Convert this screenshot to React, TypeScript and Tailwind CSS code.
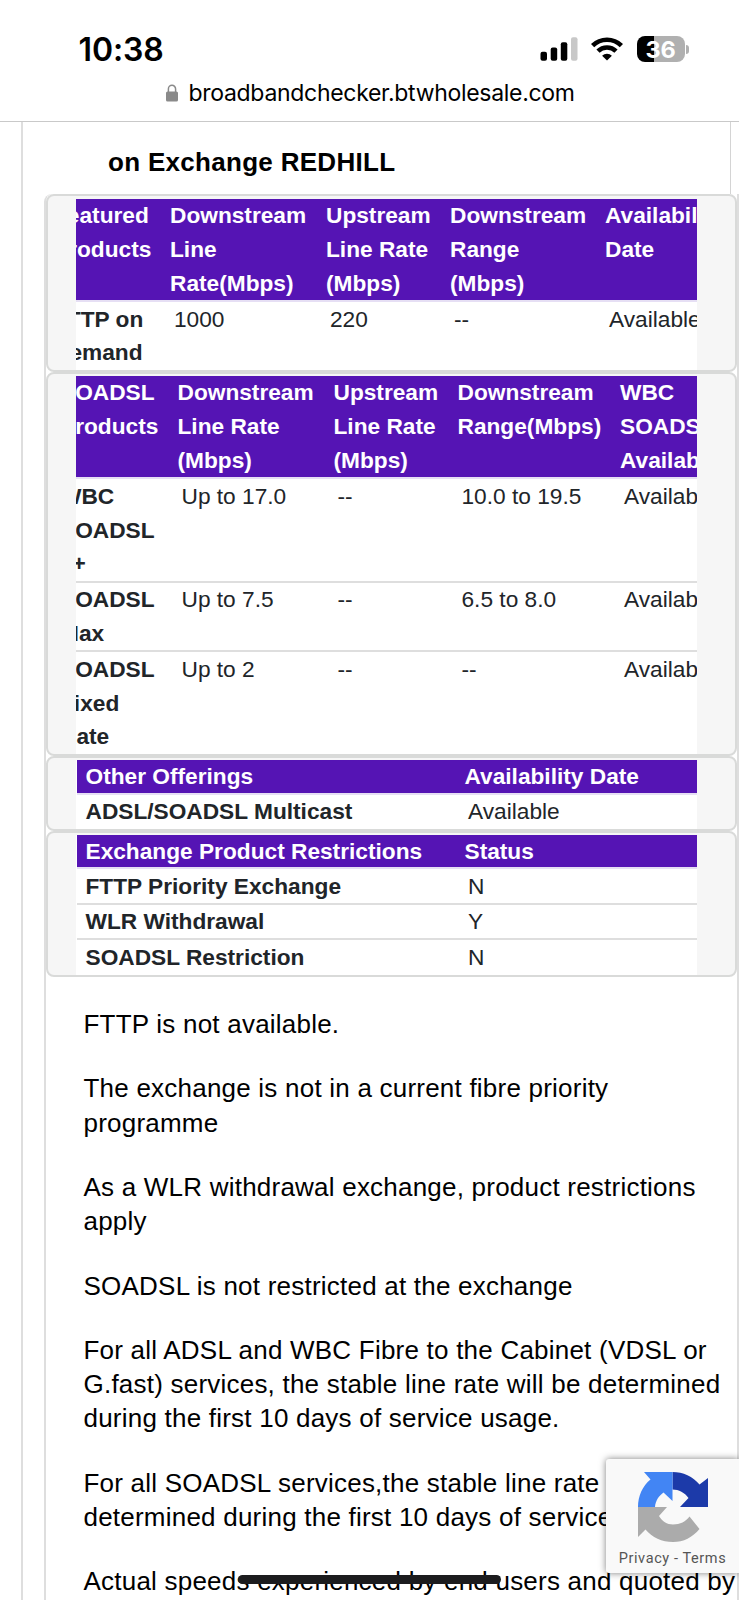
import type { ReactNode } from 'react';

type Row = string[][];

type Product = {
  columns: string;
  head: Row;
  rows: Row[];
};

const FEATURED: Product = {
  columns: '-ml-[23px] grid-cols-[117px_156px_124px_155px_160px]',
  head: [
    ['Featured', 'Products'],
    ['Downstream', 'Line', 'Rate(Mbps)'],
    ['Upstream', 'Line Rate', '(Mbps)'],
    ['Downstream', 'Range', '(Mbps)'],
    ['Availability', 'Date'],
  ],
  rows: [[['FTTP on', 'Demand'], ['1000'], ['220'], ['--'], ['Available']]],
};

const SOADSL: Product = {
  columns: '-ml-[16px] grid-cols-[117.5px_156px_124px_162.5px_160px]',
  head: [
    ['SOADSL', 'Products'],
    ['Downstream', 'Line Rate', '(Mbps)'],
    ['Upstream', 'Line Rate', '(Mbps)'],
    ['Downstream', 'Range(Mbps)'],
    ['WBC', 'SOADSL', 'Availability'],
  ],
  rows: [
    [['WBC', 'SOADSL', '2+'], ['Up to 17.0'], ['--'], ['10.0 to 19.5'], ['Available']],
    [['SOADSL', 'Max'], ['Up to 7.5'], ['--'], ['6.5 to 8.0'], ['Available']],
    [['SOADSL', 'Fixed', 'Rate'], ['Up to 2'], ['--'], ['--'], ['Available']],
  ],
};

const NOTES = [
  ['FTTP is not available.'],
  ['The exchange is not in a current fibre priority', 'programme'],
  ['As a WLR withdrawal exchange, product restrictions', 'apply'],
  ['SOADSL is not restricted at the exchange'],
  [
    'For all ADSL and WBC Fibre to the Cabinet (VDSL or',
    'G.fast) services, the stable line rate will be determined',
    'during the first 10 days of service usage.',
  ],
  ['For all SOADSL services,the stable line rate', 'determined during the first 10 days of service'],
  ['Actual speeds experienced by end users and quoted by'],
];

function StatusBar() {
  return (
    <div className="flex h-[72px] items-end justify-between pl-[78.5px] pr-[50px]">
      <span className="pt-px font-[Inter,sans-serif] text-[32px] font-semibold leading-[45px] tracking-[-0.1px]">10:38</span>
      <div className="flex h-[46px] items-center">
        <svg width="38" height="26" viewBox="0 0 38 26">
          <rect x="0.5" y="15.8" width="6.5" height="9" rx="2" fill="#000" />
          <rect x="10.7" y="11.6" width="6.5" height="13.2" rx="2" fill="#000" />
          <rect x="20.8" y="6.3" width="6.5" height="18.5" rx="2" fill="#000" />
          <rect x="31" y="1.2" width="6.5" height="23.6" rx="2" fill="#c8c8c8" />
        </svg>
        <svg className="ml-[13px]" width="32" height="26" viewBox="0 -0.8 32 26" fill="none" stroke="#000" strokeWidth="4.6">
          <path d="M1.6 8.8a20.6 20.6 0 0 1 28.8 0" />
          <path d="M7 14.3a12.9 12.9 0 0 1 18 0" />
          <path d="M16 23.8l-4.9-4.9a6.9 6.9 0 0 1 9.8 0z" fill="#000" stroke="none" />
        </svg>
        <div className="ml-[13.5px] flex h-[26px] w-[48px] items-start justify-center rounded-[8px] bg-linear-to-r from-black from-36% to-[#b0b0b0] to-36%">
          <span className="pt-px font-[Inter,sans-serif] text-[23.5px] font-bold leading-[26px] tracking-[-0.3px] text-white">36</span>
        </div>
        <div className="ml-[1.5px] h-[9px] w-[3px] rounded-r-full bg-[#b0b0b0]" />
      </div>
    </div>
  );
}

function AddressBar() {
  return (
    <div className="flex h-[49px] items-start pl-[166px] pt-[6px]">
      <svg className="mt-[6px]" width="12" height="18" viewBox="0 0 12 18">
        <path d="M2.4 9V4.9a3.6 3.6 0 0 1 7.2 0V9" fill="none" stroke="#8a8a8a" strokeWidth="1.5" />
        <rect x="0" y="7.5" width="12" height="10" rx="1.6" fill="#8a8a8a" />
      </svg>
      <span className="ml-[10.5px] whitespace-nowrap font-[Inter,sans-serif] text-[23px] leading-[31px] tracking-[-0.3px]">
        broadbandchecker.btwholesale.com
      </span>
    </div>
  );
}

function Lines({ lines }: { lines: string[] }) {
  return (
    <>
      {lines.map((line, i) => (
        <div key={i} className="whitespace-nowrap">{line}</div>
      ))}
    </>
  );
}

function Fieldset({ children }: { children: ReactNode }) {
  return (
    <div className="rounded-[8px] border-2 border-[#d9dad9] bg-[#f6f6f6] pl-[28px] pr-[38px] pt-[2px] first:pt-[3px]">
      <div className="overflow-hidden bg-white pb-[0.6px] text-[22.7px] leading-[33.8px] text-[#212529]">
        {children}
      </div>
    </div>
  );
}

function ProductTable({ columns, head, rows }: Product) {
  return (
    <div>
      <div className="h-[103px] border-b-2 border-[#e6dff4] bg-[#5514b4] font-bold text-white">
        <div className={`grid ${columns}`}>
          {head.map((cell, i) => (
            <div key={i} className="pt-[0.3px]"><Lines lines={cell} /></div>
          ))}
        </div>
      </div>
      {rows.map((row, r) => (
        <div key={r} className="border-b-2 border-[#dedede] last:border-b-0">
          <div className={`-mb-[0.6px] grid pt-[0.6px] ${columns}`}>
            {row.map((cell, i) => (
              <div key={i} className={i === 0 ? 'font-bold' : 'pl-[4px]'}><Lines lines={cell} /></div>
            ))}
          </div>
        </div>
      ))}
    </div>
  );
}

function PairTable({ head, rows }: { head: string[]; rows: string[][] }) {
  return (
    <div className="pl-px">
      <div className="flex h-[34.4px] border-b-2 border-[#e6dff4] bg-[#5514b4] pl-[8.5px] font-bold text-white">
        <span className="w-[379px]">{head[0]}</span>
        <span>{head[1]}</span>
      </div>
      {rows.map(row => (
        <div key={row[0]} className="flex h-[35.5px] border-b-2 border-[#dedede] pl-[8.5px] pt-[0.4px] last:h-[33.8px] last:border-b-0">
          <span className="w-[382.5px] font-bold">{row[0]}</span>
          <span>{row[1]}</span>
        </div>
      ))}
    </div>
  );
}

function Recaptcha() {
  return (
    <div className="absolute right-0 top-[1459px] z-10 flex h-[114px] w-[133px] flex-col items-center rounded-l-[3px] bg-[#f9f9f9] pt-[12px] shadow-[0_0_7px_rgba(0,0,0,0.5)]">
      <svg width="72" height="72" viewBox="0 0 72 72">
        <path d="M35.500 1C46 1 56 5.500 62.500 13.500L71 7V36H43L51.500 27C47.500 21.500 42 18.500 35.500 18.500z" fill="#1c3aa9" />
        <path d="M35.500 1H7L13.500 8.500C5.500 15 1 25 1 36H18C18.500 30 21.500 25 26.500 21.500L35.500 30z" fill="#4285f4" />
        <path d="M1 36H30L22 45C25 50 30 53.500 36 53.500C43 53.500 49 50.500 52.500 45.500L62.500 58C55.500 66.500 46.500 71 36 71C25 71 15 66.500 8.500 58.500L1 66z" fill="#ababab" />
      </svg>
      <span className="mt-[7px] whitespace-nowrap font-[Roboto,sans-serif] text-[14.5px] leading-[18px] tracking-[0.6px] text-[#555]">
        Privacy - Terms
      </span>
    </div>
  );
}

export default function App() {
  return (
    <div className="relative flex h-[1600px] w-[739px] flex-col overflow-hidden bg-white font-['Liberation_Sans',Arial,sans-serif] text-black">
      <header className="h-[122px] shrink-0 border-b border-[#c9c9c9]">
        <StatusBar />
        <AddressBar />
      </header>

      <div className="ml-[21px] flex grow flex-col border-l-2 border-[#dedede]">
        <h2 className="mr-[8.5px] h-[72px] border-r border-[#d4d4d4] pl-[85px] pt-[23px] text-[26px] font-bold leading-[34px] tracking-[0.3px]">
          on Exchange REDHILL
        </h2>

        <div className="ml-[21px] grow rounded-tl-[8px] border-x-2 border-[#dedede]">
          <div>
            <Fieldset>
              <ProductTable {...FEATURED} />
            </Fieldset>
            <Fieldset>
              <ProductTable {...SOADSL} />
            </Fieldset>
            <Fieldset>
              <PairTable head={['Other Offerings', 'Availability Date']} rows={[['ADSL/SOADSL Multicast', 'Available']]} />
            </Fieldset>
            <Fieldset>
              <PairTable
                head={['Exchange Product Restrictions', 'Status']}
                rows={[['FTTP Priority Exchange', 'N'], ['WLR Withdrawal', 'Y'], ['SOADSL Restriction', 'N']]}
              />
            </Fieldset>
          </div>

          <div className="space-y-[30.2px] pl-[37.5px] pt-[30.3px] text-[26px] leading-[34.2px] tracking-[0.22px]">
            {NOTES.map((note, i) => (
              <div key={i}><Lines lines={note} /></div>
            ))}
          </div>
        </div>
      </div>

      <Recaptcha />

      {/* Home indicator */}
      <div className="absolute left-[238px] top-[1575px] z-20 h-[9px] w-[263px] rounded-full bg-[#1c1c1e]" />
    </div>
  );
}
